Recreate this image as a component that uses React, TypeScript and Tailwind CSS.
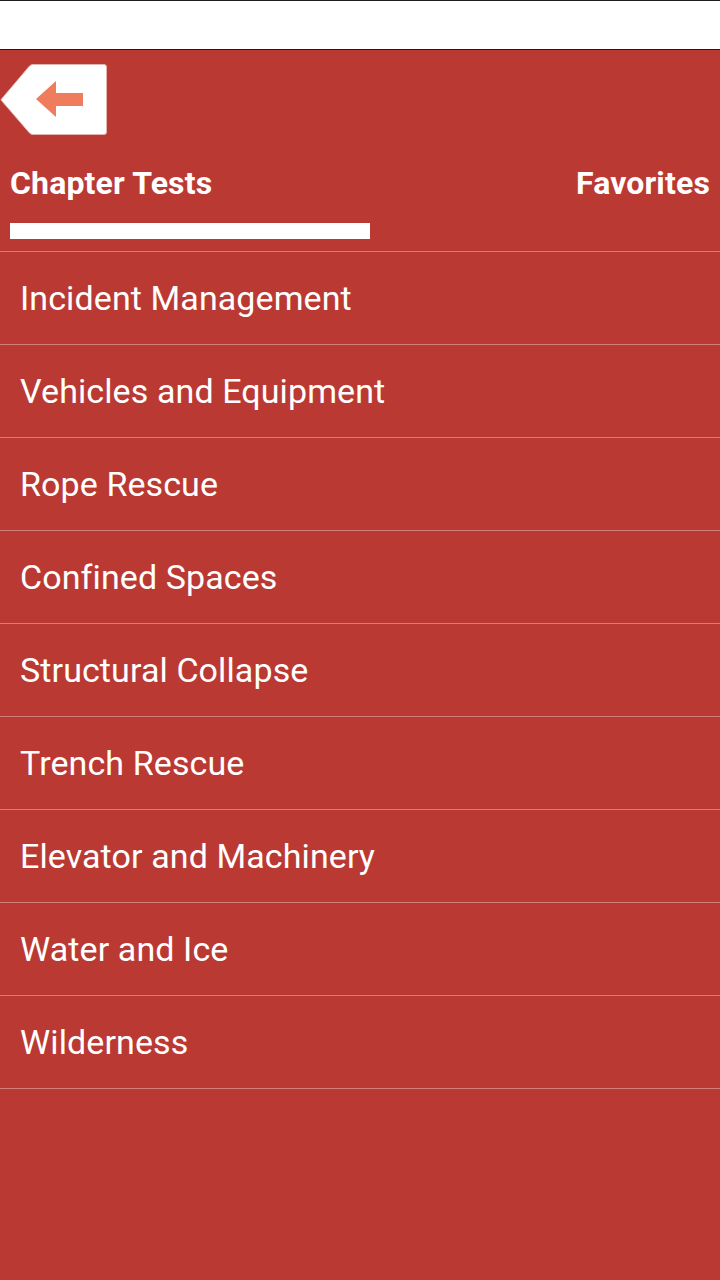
import React from 'react';

const chapters = [
  'Incident Management',
  'Vehicles and Equipment',
  'Rope Rescue',
  'Confined Spaces',
  'Structural Collapse',
  'Trench Rescue',
  'Elevator and Machinery',
  'Water and Ice',
  'Wilderness',
];

function BackButton() {
  return (
    <button className="block w-[108px] h-[72px]">
      <svg width="108" height="72" viewBox="0 0 108 72">
        <path
          d="M33 0.5 H104 Q106.5 0.5 106.5 3 V68 Q106.5 70.5 104 70.5 H33 Q31 70.5 29.5 69 L1 36 Q1 35.5 1.5 35 L29.5 2 Q31 0.5 33 0.5 Z"
          fill="#ffffff"
          stroke="#e3b5b0"
          strokeWidth="1"
        />
        <path d="M36 35 L56 17 V29 H83 V42 H56 V53 Z" fill="#ef7c5c" />
      </svg>
    </button>
  );
}

export default function App() {
  return (
    <div className="w-[720px] h-[1280px] flex flex-col bg-[#bb3933] text-white font-['Roboto',sans-serif] overflow-hidden">
      <header className="h-[50px] shrink-0 bg-white border-t border-b border-[#1c1c1c]" />

      <div className="pt-[14px]">
        <BackButton />
      </div>

      <nav className="h-[115px] shrink-0 flex flex-col px-[10px] pt-[28px]">
        <div className="flex justify-between text-[32px] leading-[38px] font-bold tracking-[0.15px]">
          <span>Chapter Tests</span>
          <span>Favorites</span>
        </div>
        <div className="w-[360px] h-[16px] mt-[21px] bg-white" />
      </nav>

      <ul className="border-t border-[#d07f7a]">
        {chapters.map((name) => (
          <li
            key={name}
            className="h-[93px] flex items-center pl-[20px] text-[34px] tracking-[0.1px] border-b border-[#d07f7a]"
          >
            {name}
          </li>
        ))}
      </ul>
    </div>
  );
}
